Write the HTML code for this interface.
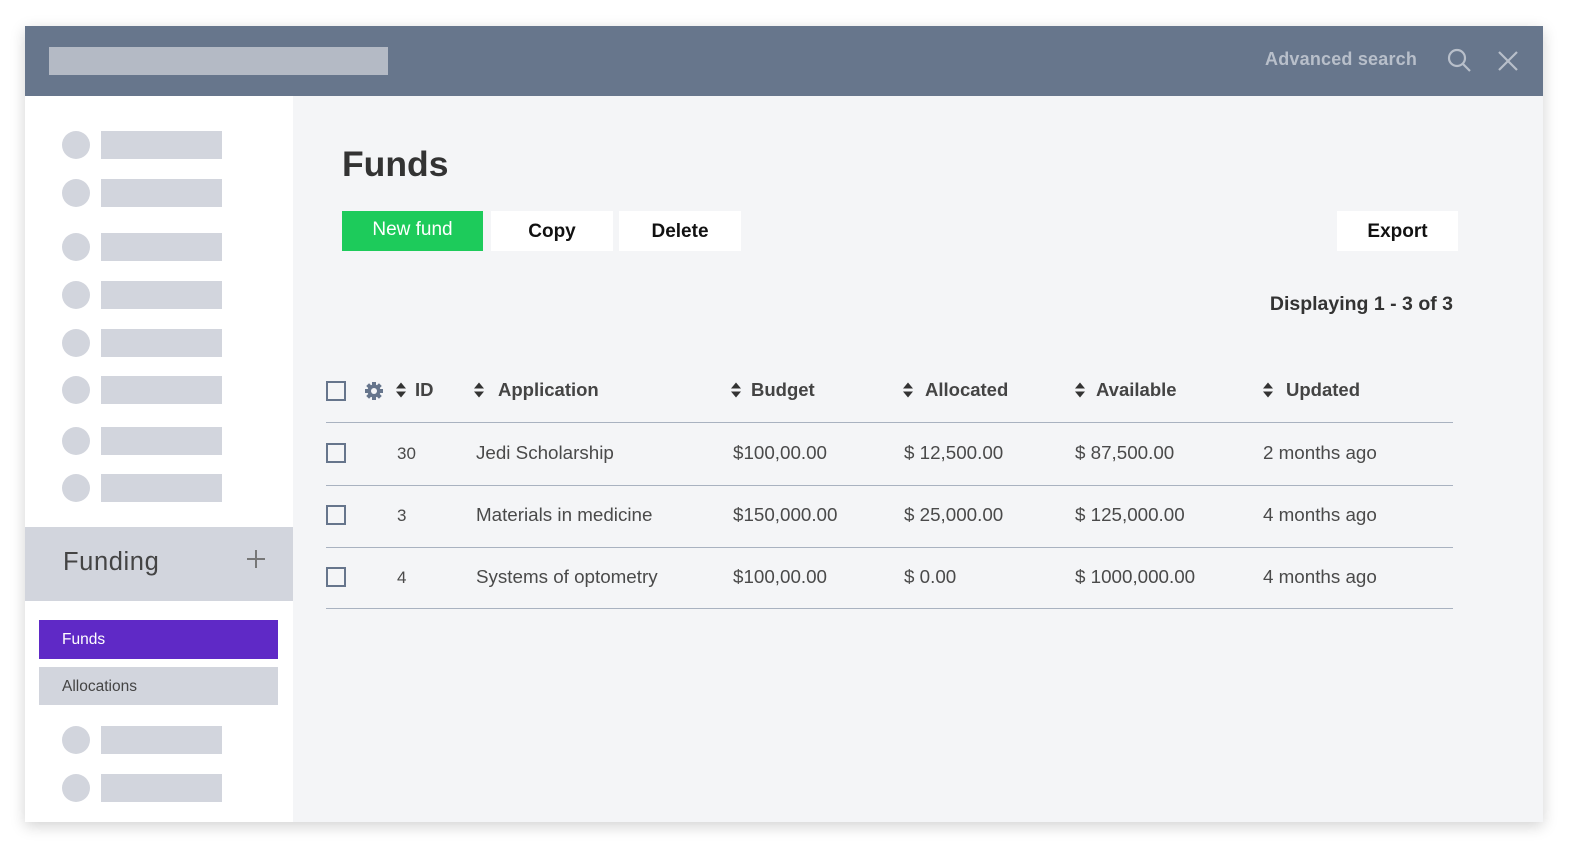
<!DOCTYPE html>
<html><head><meta charset="utf-8"><style>
*{margin:0;padding:0;box-sizing:border-box}
body{width:1580px;height:859px;background:#fff;position:relative;overflow:hidden;font-family:"Liberation Sans",sans-serif;color:#444}
.a{position:absolute}
.win{left:25px;top:26px;width:1518px;height:796px;background:#f4f5f7;box-shadow:0 4px 14px rgba(0,0,0,.18)}
.hdr{left:25px;top:26px;width:1518px;height:70px;background:#67768c}
.side{left:25px;top:96px;width:268px;height:726px;background:#fff}
.c{width:28px;height:28px;border-radius:50%;background:#d2d5dd;left:62px}
.b{width:121px;height:28px;background:#d2d5dd;left:101px}
.btn{top:211px;height:40px;background:#fff;font-weight:bold;font-size:19px;color:#111;text-align:center;line-height:42px}
.cb{width:20px;height:20px;border:2px solid #66758c;left:326px;background:transparent}
.ln{left:326px;width:1127px;height:1px;background:#a9b2c0}
.th{font-weight:bold;font-size:18.5px;color:#444}
.td{font-size:18.8px;color:#4a4a4a}
.ar{width:12px;height:18px}
</style></head><body>
<div class="a win"></div>
<div class="a hdr"></div>
<div class="a" style="left:49px;top:47px;width:339px;height:28px;background:#b4bac5"></div>
<div class="a" style="left:1265px;top:49px;font-size:18px;font-weight:bold;color:#b8bfca;letter-spacing:.2px">Advanced search</div>
<svg class="a" style="left:1447px;top:48px" width="26" height="26" viewBox="0 0 26 26"><circle cx="10" cy="10" r="8" fill="none" stroke="#b8bfca" stroke-width="2.2"/><line x1="16" y1="16" x2="23" y2="23" stroke="#b8bfca" stroke-width="2.2"/></svg>
<svg class="a" style="left:1497px;top:50px" width="22" height="22" viewBox="0 0 22 22"><path d="M2 2L20 20M20 2L2 20" stroke="#b8bfca" stroke-width="2.2"/></svg>
<div class="a side"></div>
<div class="a c" style="top:131px"></div><div class="a b" style="top:131px"></div>
<div class="a c" style="top:179px"></div><div class="a b" style="top:179px"></div>
<div class="a c" style="top:233px"></div><div class="a b" style="top:233px"></div>
<div class="a c" style="top:281px"></div><div class="a b" style="top:281px"></div>
<div class="a c" style="top:329px"></div><div class="a b" style="top:329px"></div>
<div class="a c" style="top:376px"></div><div class="a b" style="top:376px"></div>
<div class="a c" style="top:427px"></div><div class="a b" style="top:427px"></div>
<div class="a c" style="top:474px"></div><div class="a b" style="top:474px"></div>
<div class="a" style="left:25px;top:527px;width:268px;height:74px;background:#d2d5dd"></div>
<div class="a" style="left:63px;top:548px;font-size:25.5px;color:#444;letter-spacing:.6px">Funding</div>
<svg class="a" style="left:246px;top:549px" width="20" height="20"><path d="M10 1V19M1 10H19" stroke="#777" stroke-width="2"/></svg>
<div class="a" style="left:39px;top:620px;width:239px;height:39px;background:#5f29c6;color:#fff;font-size:15.5px;line-height:40px;padding-left:23px">Funds</div>
<div class="a" style="left:39px;top:667px;width:239px;height:38px;background:#d2d5dd;color:#444;font-size:15.5px;line-height:40px;padding-left:23px">Allocations</div>
<div class="a c" style="top:726px"></div><div class="a b" style="top:726px"></div>
<div class="a c" style="top:774px"></div><div class="a b" style="top:774px"></div>

<div class="a" style="left:342px;top:144px;font-size:35.5px;font-weight:bold;color:#333">Funds</div>
<div class="a btn" style="left:342px;width:141px;background:#1dcb5b;color:#fff;font-weight:normal;line-height:38px">New fund</div>
<div class="a btn" style="left:491px;width:122px">Copy</div>
<div class="a btn" style="left:619px;width:122px">Delete</div>
<div class="a btn" style="left:1337px;width:121px">Export</div>
<div class="a" style="right:127px;top:293px;font-size:19.5px;font-weight:bold;color:#333">Displaying 1 - 3 of 3</div>

<div class="a cb" style="top:381px"></div>
<svg class="a" style="left:364px;top:381px" width="20" height="20" viewBox="0 0 20 20"><g fill="#66758c"><circle cx="10" cy="10" r="6.5"/><rect x="8" y="1" width="4" height="18"/><rect x="1" y="8" width="18" height="4"/><rect x="8" y="1" width="4" height="18" transform="rotate(45 10 10)"/><rect x="8" y="1" width="4" height="18" transform="rotate(-45 10 10)"/></g><circle cx="10" cy="10" r="3" fill="#f4f5f7"/></svg>
<svg class="a ar" style="left:395px;top:381px" viewBox="0 0 12 18"><path d="M1 7.5L6 1.5L11 7.5ZM1 10.5L6 16.5L11 10.5Z" fill="#333"/></svg>
<div class="a th" style="left:415px;top:379px">ID</div>
<svg class="a ar" style="left:473px;top:381px" viewBox="0 0 12 18"><path d="M1 7.5L6 1.5L11 7.5ZM1 10.5L6 16.5L11 10.5Z" fill="#333"/></svg>
<div class="a th" style="left:498px;top:379px">Application</div>
<svg class="a ar" style="left:730px;top:381px" viewBox="0 0 12 18"><path d="M1 7.5L6 1.5L11 7.5ZM1 10.5L6 16.5L11 10.5Z" fill="#333"/></svg>
<div class="a th" style="left:751px;top:379px">Budget</div>
<svg class="a ar" style="left:902px;top:381px" viewBox="0 0 12 18"><path d="M1 7.5L6 1.5L11 7.5ZM1 10.5L6 16.5L11 10.5Z" fill="#333"/></svg>
<div class="a th" style="left:925px;top:379px">Allocated</div>
<svg class="a ar" style="left:1074px;top:381px" viewBox="0 0 12 18"><path d="M1 7.5L6 1.5L11 7.5ZM1 10.5L6 16.5L11 10.5Z" fill="#333"/></svg>
<div class="a th" style="left:1096px;top:379px">Available</div>
<svg class="a ar" style="left:1262px;top:381px" viewBox="0 0 12 18"><path d="M1 7.5L6 1.5L11 7.5ZM1 10.5L6 16.5L11 10.5Z" fill="#333"/></svg>
<div class="a th" style="left:1286px;top:379px">Updated</div>
<div class="a ln" style="top:422px"></div>

<div class="a cb" style="top:443px"></div>
<div class="a td" style="left:397px;top:444px;font-size:17px">30</div>
<div class="a td" style="left:476px;top:442px">Jedi Scholarship</div>
<div class="a td" style="left:733px;top:442px">$100,00.00</div>
<div class="a td" style="left:904px;top:442px">$ 12,500.00</div>
<div class="a td" style="left:1075px;top:442px">$ 87,500.00</div>
<div class="a td" style="left:1263px;top:442px">2 months ago</div>
<div class="a ln" style="top:485px"></div>

<div class="a cb" style="top:505px"></div>
<div class="a td" style="left:397px;top:506px;font-size:17px">3</div>
<div class="a td" style="left:476px;top:504px">Materials in medicine</div>
<div class="a td" style="left:733px;top:504px">$150,000.00</div>
<div class="a td" style="left:904px;top:504px">$ 25,000.00</div>
<div class="a td" style="left:1075px;top:504px">$ 125,000.00</div>
<div class="a td" style="left:1263px;top:504px">4 months ago</div>
<div class="a ln" style="top:547px"></div>

<div class="a cb" style="top:567px"></div>
<div class="a td" style="left:397px;top:568px;font-size:17px">4</div>
<div class="a td" style="left:476px;top:566px">Systems of optometry</div>
<div class="a td" style="left:733px;top:566px">$100,00.00</div>
<div class="a td" style="left:904px;top:566px">$ 0.00</div>
<div class="a td" style="left:1075px;top:566px">$ 1000,000.00</div>
<div class="a td" style="left:1263px;top:566px">4 months ago</div>
<div class="a ln" style="top:608px"></div>
</body></html>
